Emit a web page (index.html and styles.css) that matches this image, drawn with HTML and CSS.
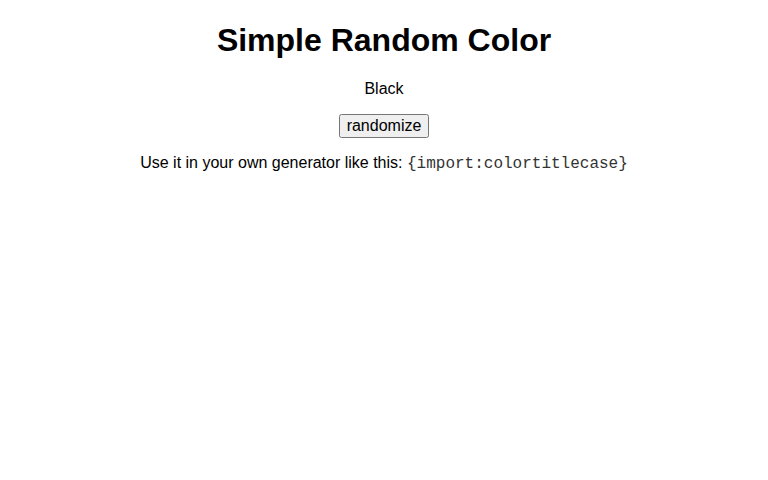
FILE: index.html
```html
<!DOCTYPE html>
<html lang="en">
<head>
    <meta charset="UTF-8">
    <title>Simple Random Color</title>
    <link rel="stylesheet" href="styles.css">
</head>
<body>
    <h1>Simple Random Color</h1>
    <p id="output">Black</p>
    <p><button id="randomize">randomize</button></p>
    <p>Use it in your own generator like this: <code>{import:colortitlecase}</code></p>
</body>
</html>
```

FILE: styles.css
```css
body { font-family: "Liberation Sans", Arial, sans-serif; font-size: 16px; text-align: center; margin: 8px; color: #000; background: #fff; }
h1 { font-size: 32px; margin: 14px 0 21px; }
p { margin: 16px 0; }
button { font-family: "Liberation Sans", Arial, sans-serif; font-size: 16px; padding: 1px 6px; }
code { font-family: "Nimbus Mono PS", "Liberation Mono", monospace; font-size: 16px; color: #333; }
```
